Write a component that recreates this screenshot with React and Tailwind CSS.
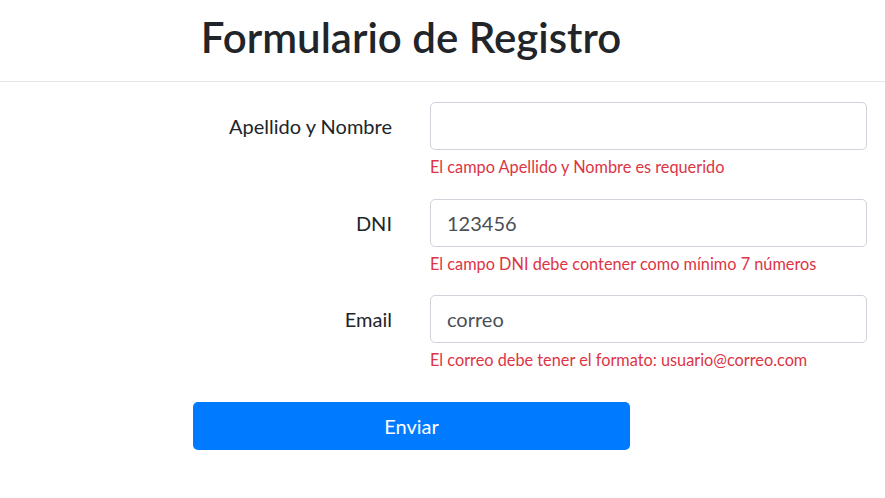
const FONT = { fontFamily: 'Lato, "Noto Sans", sans-serif' };

const fields = [
  {
    label: 'Apellido y Nombre',
    value: '',
    error: 'El campo Apellido y Nombre es requerido',
  },
  {
    label: 'DNI',
    value: '123456',
    error: 'El campo DNI debe contener como mínimo 7 números',
  },
  {
    label: 'Email',
    value: 'correo',
    error: 'El correo debe tener el formato: usuario@correo.com',
  },
];

function FormRow({ label, value, error }) {
  return (
    <div className="ml-[193px] mb-[19.5px]">
      <div className="flex items-center h-12">
        <label className="w-[199px] text-right text-[20px] text-[#212529]">{label}</label>
        <input
          className="ml-[38px] w-[437px] h-12 pl-4 pr-4 text-[20px] text-[#495057] bg-white border border-[#ced4da] rounded-[5px] outline-none"
          style={FONT}
          defaultValue={value}
        />
      </div>
      <p className="ml-[237px] mt-[5px] text-[16.3px] leading-6 text-[#dc3545]">{error}</p>
    </div>
  );
}

export default function App() {
  return (
    <div className="bg-white min-h-[498px] w-[885px]" style={FONT}>
      {/* Header */}
      <div className="h-[82px] border-b border-[#e5e5e5] pt-[12px]">
        <h1 className="ml-[111px] w-[600px] text-center whitespace-nowrap text-[42px] leading-[1.2] font-semibold text-[#212529]">
          Formulario de Registro
        </h1>
      </div>

      <form className="pt-5" onSubmit={(e) => e.preventDefault()}>
        {fields.map((f) => (
          <FormRow key={f.label} {...f} />
        ))}

        <button
          type="submit"
          className="ml-[193px] mt-[10px] w-[437px] h-12 rounded-[5px] bg-[#007bff] text-white text-[20px]"
          style={FONT}
        >
          Enviar
        </button>
      </form>
    </div>
  );
}
